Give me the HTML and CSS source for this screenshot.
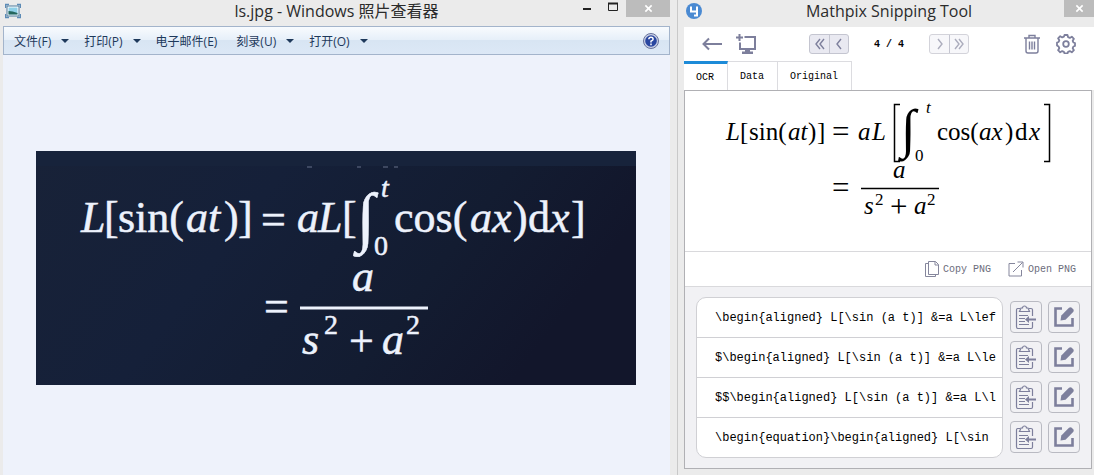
FILE: index.html
```html
<!DOCTYPE html>
<html lang="zh-CN">
<head>
  <meta charset="UTF-8">
  <title>Mathpix Snipping Tool</title>
  <link rel="stylesheet" href="styles.css">
</head>
<body>
  <!-- shared icons -->
  <svg class="sprite" aria-hidden="true">
    <symbol id="close" viewBox="0 0 10 10">
      <path d="M1.5 1.5l7 7M8.5 1.5l-7 7" fill="none" stroke="#fff" stroke-width="1.8"/>
    </symbol>
    <symbol id="clipboard" viewBox="0 0 24 26">
      <g fill="none" stroke="#7d7f9c" stroke-width="1.2">
        <path d="M6 4.5H3.8Q2.5 4.5 2.5 5.8v17q0 1.700 1.300 1.700h13.400q1.300 0 1.300-1.500v-5M18.500 12V5.800Q18.500 4.500 17 4.500h-2"/>
        <path d="M5.500 7.500h10l-1.500-3.500h-1.500a2 2 0 0 0-4 0H7z"/>
        <path d="M5 11.500h9M5 14.500h6M5 17.500h6M5 20.500h10"/>
      </g>
      <path d="M11 15.500l4-3.500v2.500h7v2h-7V19z" fill="#7d7f9c"/>
    </symbol>
    <symbol id="edit" viewBox="0 0 22 22">
      <path d="M9 2.500H2.500v17h17V12" fill="none" stroke="#7d7f9c" stroke-width="2.600"/>
      <path d="M7.500 14.500l.8-5L16 1.800q1.400-1.200 2.800 0l1.400 1.400q1.200 1.400 0 2.800L12.500 13.700z" fill="#7d7f9c"/>
    </symbol>
  </svg>

  <section class="viewer">
    <header class="titlebar">
      <svg class="app-icon" viewBox="0 0 16 14">
        <rect x="2" y="2" width="12" height="10" fill="#fff" stroke="#4c7b9b"/>
        <rect x="3.500" y="3.500" width="9" height="7" fill="#8fd0e8"/>
        <path d="M3.500 7q4 0 9 2v1.500h-9z" fill="#24665d"/>
        <path d="M.5 4V.5H4M12 .5h3.500V4M15.500 10v3.500H12M4 13.500H.5V10" fill="none" stroke="#5c8bb6" stroke-width="1.500"/>
      </svg>
      <h1>ls.jpg - Windows 照片查看器</h1>
      <div class="controls">
        <button class="control" aria-label="最小化"><svg width="10" height="10" viewBox="0 0 10 10"><path d="M1 7h8" stroke="#222" stroke-width="2"/></svg></button>
        <button class="control" aria-label="最大化"><svg width="10" height="10" viewBox="0 0 10 10"><path d="M.5 1v7.500h9V1" fill="none" stroke="#222"/><path d="M0 1.500h10" stroke="#222" stroke-width="2"/></svg></button>
        <button class="control close wide" aria-label="关闭"><svg width="9" height="9"><use href="#close"/></svg></button>
      </div>
    </header>
    <nav class="menu">
      <button class="drop">文件(F)</button>
      <button class="drop">打印(P)</button>
      <button class="plain">电子邮件(E)</button>
      <button class="drop">刻录(U)</button>
      <button class="drop">打开(O)</button>
      <button class="help" aria-label="帮助">
        <svg width="16" height="16" viewBox="0 0 16 16">
          <circle cx="8" cy="8" r="7.500" fill="#c9d0e6" stroke="#68729b"/>
          <circle cx="8" cy="8" r="5.800" fill="#2946a0"/>
          <path d="M5.800 6.300Q6 4.300 8 4.300t2.200 1.800Q10.200 7.300 8 8.200v1.300M8 10.600v1.600" fill="none" stroke="#fff" stroke-width="1.500"/>
        </svg>
      </button>
    </nav>
    <main class="stage">
      <svg class="photo" viewBox="0 0 600 234">
        <defs>
          <linearGradient id="board" x1="0" y1="0" x2="1" y2="0.3">
            <stop offset="0" stop-color="#182238"/>
            <stop offset="0.4" stop-color="#152039"/>
            <stop offset="0.75" stop-color="#131c31"/>
            <stop offset="1" stop-color="#12162b"/>
          </linearGradient>
        </defs>
        <rect width="600" height="234" fill="url(#board)"/>
        <rect width="600" height="15" fill="#17233b"/>
        <path d="M271 16h5M321 16h4M347 16h5M358 16h4" stroke="#66708a"/>
        <g class="chalk">
          <text class="it" x="45" y="81">L</text>
          <text x="68" y="81">[</text>
          <text x="82" y="81">sin(</text>
          <text class="it" x="150" y="81">at</text>
          <text x="188" y="81">)</text>
          <text x="202" y="81">]</text>
          <text x="225" y="83">=</text>
          <text class="it" x="261" y="81">a</text>
          <text class="it" x="282" y="81">L</text>
          <text x="306" y="81">[</text>
          <text class="integral" x="321" y="88">∫</text>
          <text class="it small" x="345" y="46">t</text>
          <text class="small" x="338" y="104">0</text>
          <text x="358" y="81">cos(</text>
          <text class="it" x="434" y="81">ax</text>
          <text x="477" y="81">)</text>
          <text x="492" y="81">d</text>
          <text class="it" x="514" y="81">x</text>
          <text x="535" y="81">]</text>
          <text x="228" y="170">=</text>
          <text class="it" x="316" y="140">a</text>
          <text class="it" x="266" y="203">s</text>
          <text class="small" x="288" y="183">2</text>
          <text x="313" y="205">+</text>
          <text class="it" x="346" y="203">a</text>
          <text class="small" x="370" y="183">2</text>
          <path class="bar" d="M264 157h128"/>
        </g>
      </svg>
    </main>
  </section>

  <section class="snip">
    <header class="titlebar">
      <svg class="app-icon" viewBox="0 0 16 16">
        <circle cx="8" cy="8" r="8" fill="#4a8ad2"/>
        <path d="M5 3.500v5h6M11 3.500v9H8" fill="none" stroke="#fff" stroke-width="2"/>
      </svg>
      <h2>Mathpix Snipping Tool</h2>
      <div class="controls">
        <button class="control close" aria-label="Close"><svg width="9" height="9"><use href="#close"/></svg></button>
      </div>
    </header>

    <div class="toolbar">
      <div class="tools">
        <button aria-label="Back"><svg width="20" height="20" viewBox="0 0 20 20"><path d="M20 10H1.500M7 4.500L1.500 10 7 15.500" fill="none" stroke="#7d7f9c" stroke-width="2"/></svg></button>
        <button aria-label="New snip">
          <svg width="20" height="20" viewBox="0 0 20 20">
            <path d="M8.500 3H19v12H4V8.500" fill="none" stroke="#7d7f9c" stroke-width="2"/>
            <path d="M0 3.500h7M3.500 0v7" stroke="#7d7f9c" stroke-width="2"/>
            <path d="M9 15h5v2.500h3V20H6v-2.500h3z" fill="#7d7f9c"/>
          </svg>
        </button>
      </div>
      <div class="pager">
        <div class="pair">
          <button aria-label="First"><svg width="10" height="12" viewBox="0 0 10 12"><path d="M5 1L1 6l4 5M9 1L5 6l4 5"/></svg></button>
          <button aria-label="Previous"><svg width="10" height="12" viewBox="0 0 10 12"><path d="M7 1L3 6l4 5"/></svg></button>
        </div>
        <span class="count">4 / 4</span>
        <div class="pair off">
          <button aria-label="Next" disabled><svg width="10" height="12" viewBox="0 0 10 12"><path d="M3 1l4 5-4 5"/></svg></button>
          <button aria-label="Last" disabled><svg width="10" height="12" viewBox="0 0 10 12"><path d="M1 1l4 5-4 5M5 1l4 5-4 5"/></svg></button>
        </div>
      </div>
      <div class="tools end">
        <button aria-label="Delete">
          <svg width="16" height="20" viewBox="0 0 16 20">
            <path d="M0 4h16M5 4V1.500h6V4M2 4v13q0 2 2 2h8q2 0 2-2V4M5.500 7.500v8M8 7.500v8M10.500 7.500v8" fill="none" stroke="#7d7f9c" stroke-width="1.400"/>
          </svg>
        </button>
        <button aria-label="Settings">
          <svg width="20" height="20" viewBox="0 0 20 20">
            <g fill="none" stroke="#7d7f9c" stroke-width="1.800" stroke-linejoin="round">
              <path d="M8.500 1h3l.6 2.200 1.700.7 2-1.200 2.100 2.100-1.200 2 .7 1.700 1.600.5v3l-1.600.5-.7 1.700 1.200 2-2.100 2.100-2-1.200-1.700.7-.6 1.700h-3l-.6-1.700-1.700-.7-2 1.200-2.100-2.100 1.200-2-.7-1.700L1 11.500v-3L2.600 8l.7-1.700-1.200-2L4.200 2.200l2 1.200 1.700-.7z"/>
              <circle cx="10" cy="10" r="2.800"/>
            </g>
          </svg>
        </button>
      </div>
    </div>

    <div class="tabs">
      <button class="tab active">OCR</button>
      <button class="tab">Data</button>
      <button class="tab">Original</button>
    </div>

    <div class="panel">
      <div class="preview">
        <svg class="formula" viewBox="0 0 328 116">
          <text class="it" x="1" y="39">L</text>
          <text x="15" y="39">[</text>
          <text x="24" y="39">sin(</text>
          <text class="it" x="63" y="39">at</text>
          <text x="83" y="39">)</text>
          <text x="92" y="39">]</text>
          <text class="sign" x="107" y="41">=</text>
          <text class="it" x="133" y="39">a</text>
          <text class="it" x="147" y="39">L</text>
          <path d="M175 3.500h-5.500v57h5.500"/>
          <text class="integral" x="176" y="46">∫</text>
          <text class="it small" x="201" y="12">t</text>
          <text class="small" x="190" y="60">0</text>
          <text x="212" y="39">cos(</text>
          <text class="it" x="254" y="39">ax</text>
          <text x="280" y="39">)</text>
          <text x="290" y="39">d</text>
          <text class="it" x="304" y="39">x</text>
          <path d="M319 3.500h5.500v57H319"/>
          <text class="sign" x="107" y="97">=</text>
          <text class="it" x="168" y="77">a</text>
          <path d="M136 87.500h78"/>
          <text class="it" x="139" y="113">s</text>
          <text class="small" x="150" y="104">2</text>
          <text class="sign" x="165" y="116">+</text>
          <text class="it" x="189" y="113">a</text>
          <text class="small" x="202" y="104">2</text>
        </svg>
      </div>
      <div class="png">
        <button>
          <svg width="14" height="16" viewBox="0 0 14 16"><path d="M3.500.5h7l3 3v10h-10zM10 .5V4h3.500M3.500 2.500h-3v13h10v-2"/></svg>
          Copy PNG
        </button>
        <button>
          <svg width="16" height="16" viewBox="0 0 16 16"><path d="M7 2.500H1v12.500h12.500V9M5 11l9.500-9.500M9.500 1H15v5.500"/></svg>
          Open PNG
        </button>
      </div>
      <div class="results">
        <div class="codes">
          <input type="text" readonly aria-label="LaTeX" value="\begin{aligned} L[\sin (a t)] &amp;=a L\lef">
          <input type="text" readonly aria-label="Inline LaTeX" value="$\begin{aligned} L[\sin (a t)] &amp;=a L\le">
          <input type="text" readonly aria-label="Display LaTeX" value="$$\begin{aligned} L[\sin (a t)] &amp;=a L\l">
          <input type="text" readonly aria-label="Equation LaTeX" value="\begin{equation}\begin{aligned} L[\sin">
        </div>
        <div class="actions">
          <button aria-label="Copy"><svg width="24" height="26"><use href="#clipboard"/></svg></button>
          <button aria-label="Edit"><svg width="22" height="22"><use href="#edit"/></svg></button>
          <button aria-label="Copy"><svg width="24" height="26"><use href="#clipboard"/></svg></button>
          <button aria-label="Edit"><svg width="22" height="22"><use href="#edit"/></svg></button>
          <button aria-label="Copy"><svg width="24" height="26"><use href="#clipboard"/></svg></button>
          <button aria-label="Edit"><svg width="22" height="22"><use href="#edit"/></svg></button>
          <button aria-label="Copy"><svg width="24" height="26"><use href="#clipboard"/></svg></button>
          <button aria-label="Edit"><svg width="22" height="22"><use href="#edit"/></svg></button>
        </div>
      </div>
    </div>
  </section>
</body>
</html>
```

FILE: styles.css
```css
* {
  box-sizing: border-box;
}
body {
  margin: 0;
  min-height: 100vh;
  display: grid;
  grid-template-columns: 1fr 416px;
  background: #ebebeb;
  font-family: 'Open Sans', 'Noto Sans CJK SC', sans-serif;
}
button {
  margin: 0;
  padding: 0;
  border: none;
  background: none;
  font: inherit;
  color: inherit;
}
svg {
  display: block;
}
.sprite {
  position: absolute;
  width: 0;
  height: 0;
}

/* window frame */
.titlebar {
  display: grid;
  grid-template-columns: 1fr auto 1fr;
  height: 26px;
}
.titlebar h1,
.titlebar h2 {
  margin: 0;
  font-size: 16px;
  line-height: 22px;
  font-weight: normal;
  color: #2b2b2b;
  white-space: nowrap;
}
.app-icon {
  width: 16px;
  height: 16px;
  margin: 3px 2px;
}
.controls {
  display: flex;
  justify-content: flex-end;
  align-items: flex-start;
}
.control {
  display: flex;
  justify-content: center;
  width: 26px;
  padding-top: 2px;
}
.control.close {
  align-items: center;
  width: 30px;
  height: 17px;
  padding: 0;
  background: #bcbcbc;
}
.control.wide {
  width: 44px;
}

/* photo viewer */
.viewer {
  display: flex;
  flex-direction: column;
  padding: 0 7px 0 3px;
  border-right: 1px solid #c9c9c9;
}
.menu {
  display: flex;
  align-items: center;
  gap: 15px;
  height: 29px;
  padding: 0 10px;
  border: 1px solid #a3b4cb;
  background: linear-gradient(#f8fbfe, #e6eff9 48%, #d8e5f3 50%, #dce8f6);
  font-size: 12px;
  color: #1e395b;
}
.menu button {
  display: flex;
  align-items: center;
  gap: 10px;
  white-space: nowrap;
}
.menu .plain {
  padding-right: 4px;
}
.drop::after {
  content: '';
  border: 4px solid transparent;
  border-top-color: #1e395b;
  border-bottom: none;
}
.menu .help {
  margin-left: auto;
}
.stage {
  flex: 1;
  padding: 96px 34px 0 33px;
  background: #eef2fb;
}
.photo {
  width: 100%;
}
.chalk {
  fill: #edf2fc;
  stroke: #edf2fc;
  stroke-width: 0.5px;
  font-family: 'Liberation Serif', serif;
  font-size: 44px;
}
.chalk .small {
  font-size: 28px;
}
.chalk .integral {
  font-size: 66px;
}
.bar {
  stroke-width: 3px;
}
.it {
  font-style: italic;
}

/* snipping tool */
.snip {
  display: flex;
  flex-direction: column;
  padding-left: 6px;
}
.snip .titlebar {
  height: 27px;
}
.toolbar {
  display: grid;
  grid-template-columns: 1fr auto 1fr;
  align-items: center;
  height: 34px;
  padding: 0 18px;
  background: #fff;
}
.tools {
  display: flex;
  align-items: center;
  gap: 14px;
}
.tools.end {
  justify-content: flex-end;
  gap: 16px;
}
.pager {
  display: flex;
  align-items: center;
}
.pair {
  display: flex;
  height: 20px;
  border: 1px solid #c4c5d0;
  border-radius: 3px;
  background: #e9e9f1;
}
.pair button {
  display: flex;
  align-items: center;
  justify-content: center;
  width: 19px;
}
.pair button + button {
  border-left: 1px solid #c4c5d0;
}
.pair path {
  fill: none;
  stroke: #7d7f9c;
  stroke-width: 1.4px;
}
.pair.off {
  border-color: #d3d3da;
  background: #f7f7fa;
}
.pair.off path {
  stroke: #acadbd;
}
.count,
.tabs,
.png {
  font-family: 'Liberation Mono', monospace;
  font-size: 10px;
}
.count {
  width: 80px;
  text-align: center;
  color: #000;
  font-weight: bold;
}
.tabs {
  display: flex;
  background: #fff;
}
.tab {
  height: 29px;
  padding: 0 13px 0 12px;
  border: 1px solid #dcdce0;
  border-width: 1px 1px 0 0;
  color: #000;
}
.tab.active {
  border-top: 3px solid #1d8bd8;
}
.panel {
  margin-right: 2px;
  border: 1px solid #b0b0b4;
  background: #fff;
}
.preview {
  height: 161px;
  padding: 10px 38px 0 40px;
  border-bottom: 1px solid #d9d9dc;
}
.formula {
  width: 100%;
  overflow: visible;
  fill: #000;
  font-family: 'Liberation Serif', serif;
  font-size: 25px;
}
.formula path {
  fill: none;
  stroke: #000;
  stroke-width: 1.5px;
}
.formula .small {
  font-size: 17px;
}
.formula .sign {
  font-size: 31px;
}
.formula .integral {
  font-size: 54px;
}
.png {
  display: flex;
  justify-content: flex-end;
  gap: 17px;
  height: 34px;
  padding-right: 15px;
  color: #6b6c7b;
}
.png button {
  display: flex;
  align-items: center;
  gap: 4px;
}
.png path {
  fill: none;
  stroke: #85869c;
}
.results {
  display: flex;
  gap: 7px;
  padding: 10px 11px;
  border-top: 1px solid #d9d9dc;
  background: #f1f1f4;
}
.codes {
  flex: 1;
  overflow: hidden;
  border: 1px solid #d0d0d4;
  border-radius: 10px;
  background: #fff;
}
.codes input {
  display: block;
  box-sizing: content-box;
  width: 100%;
  height: 39px;
  padding: 0 0 0 18px;
  border: none;
  outline: none;
  background: none;
  font-family: 'Liberation Mono', monospace;
  font-size: 12px;
  color: #000;
}
.codes input + input {
  border-top: 1px solid #d0d0d4;
}
.actions {
  display: grid;
  grid-template-columns: 32px 32px;
  align-content: start;
  gap: 8px 6px;
  padding-top: 4px;
}
.actions button {
  display: flex;
  align-items: center;
  justify-content: center;
  height: 32px;
  border: 1px solid #b9bac2;
  border-radius: 4px;
}
```
